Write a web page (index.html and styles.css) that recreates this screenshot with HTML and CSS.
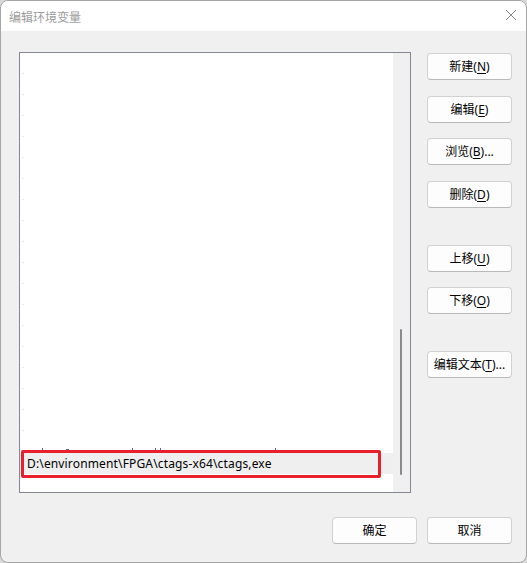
FILE: index.html
```html
<!DOCTYPE html>
<html lang="zh-CN">
<head>
<meta charset="utf-8">
<title>编辑环境变量</title>
<link rel="stylesheet" href="styles.css">
</head>
<body>
<div class="window">
  <div class="titlebar">
    <span class="title">编辑环境变量</span>
    <svg class="close" width="12" height="12" viewBox="0 0 12 12"><path d="M1 1 L11 11 M11 1 L1 11" stroke="#8a8a8a" stroke-width="1" fill="none"/></svg>
  </div>
  <div class="content">
    <div class="listbox">
      <div class="list-area">
        <div class="ghost">
          <span class="m m1"></span><span class="m m2"></span><span class="m m3"></span><span class="m m4"></span><span class="m m5"></span><span class="m m6"></span>
        </div>
        <div class="row selected">D:\environment\FPGA\ctags-x64\ctags,exe</div>
        <div class="highlight"></div>
      </div>
      <div class="scrollbar"><div class="thumb"></div></div>
    </div>
    <div class="side">
      <button class="btn">新建(<u>N</u>)</button>
      <button class="btn">编辑(<u>E</u>)</button>
      <button class="btn">浏览(<u>B</u>)...</button>
      <button class="btn">删除(<u>D</u>)</button>
      <button class="btn group">上移(<u>U</u>)</button>
      <button class="btn">下移(<u>O</u>)</button>
      <button class="btn group">编辑文本(<u>T</u>)...</button>
    </div>
  </div>
  <div class="footer">
    <button class="btn">确定</button>
    <button class="btn">取消</button>
  </div>
</div>
</body>
</html>
```
FILE: styles.css
```css
html, body {
  margin: 0;
  padding: 0;
  background: #d8d8d8;
}
body {
  font-family: "Segoe UI", "Noto Sans", "Noto Sans CJK SC", sans-serif;
  font-size: 12px;
  color: #000;
}
.window {
  width: 527px;
  height: 563px;
  box-sizing: border-box;
  border: 1px solid #a6a6a6;
  border-radius: 8px;
  background: #f0f0f0;
  overflow: hidden;
  display: flex;
  flex-direction: column;
}
.titlebar {
  height: 30px;
  background: #ffffff;
  display: flex;
  align-items: center;
  justify-content: space-between;
  padding-left: 8px;
  padding-right: 9px;
  flex: none;
}
.title {
  font-family: "Noto Sans CJK SC", sans-serif;
  font-size: 12px;
  color: #9c9c9c;
  margin-top: 1px;
}
.close {
  margin-top: -2px;
}
.content {
  display: flex;
  align-items: flex-start;
  padding: 21px 0 0 18px;
}
.listbox {
  width: 392px;
  height: 441px;
  box-sizing: border-box;
  border: 1px solid #828790;
  display: flex;
  flex: none;
}
.list-area {
  position: relative;
  flex: 1;
  background-color: #ffffff;
  background-image: repeating-linear-gradient(to bottom, transparent 0 20px, #e8e8e8 20px 21px);
  background-size: 2px 100%;
  background-position: 2px 0;
  background-repeat: no-repeat;
  display: flex;
  flex-direction: column;
  justify-content: flex-end;
  padding-bottom: 18px;
}
.ghost {
  height: 2px;
  margin-bottom: 3px;
  display: flex;
  align-items: flex-end;
}
.m {
  display: block;
  width: 1px;
  height: 2px;
  background: #5a6490;
}
.m1 { margin-left: 22px; }
.m2 { margin-left: 23px; width: 3px; height: 1px; }
.m3 { margin-left: 63px; }
.m4 { margin-left: 22px; }
.m5 { margin-left: 4px; }
.m6 { margin-left: 114px; }
.row {
  height: 21px;
  line-height: 21px;
  padding-left: 7px;
  white-space: nowrap;
  letter-spacing: 0.15px;
}
.row.selected {
  background: #efefef;
}
.highlight {
  position: absolute;
  left: 1px;
  bottom: 14px;
  width: 360px;
  height: 28px;
  box-sizing: border-box;
  border: 3px solid #e81f2c;
  border-radius: 2px;
}
.scrollbar {
  width: 17px;
  background: #f0f0f0;
  display: flex;
  flex-direction: column;
  justify-content: flex-end;
  padding-bottom: 17px;
  box-sizing: border-box;
}
.thumb {
  width: 2px;
  height: 146px;
  margin-left: 7px;
  background: #8a8a8a;
  border-radius: 1px;
}
.side {
  display: flex;
  flex-direction: column;
  gap: 15.67px;
  margin-left: 16px;
  margin-top: 1px;
}
.btn {
  width: 85px;
  height: 27px;
  box-sizing: border-box;
  background: #fdfdfd;
  border: 1px solid #d2d2d2;
  border-bottom-color: #b9b9b9;
  border-radius: 4px;
  font-family: "Segoe UI", "Noto Sans", "Noto Sans CJK SC", sans-serif;
  font-size: 12px;
  color: #000;
  padding: 0;
  line-height: 25px;
  white-space: nowrap;
}
.btn u {
  text-decoration-thickness: 1px;
  text-underline-offset: 2px;
}
.btn.group {
  margin-top: 21px;
}
.footer {
  display: flex;
  justify-content: flex-end;
  gap: 10px;
  padding-right: 14px;
  margin-top: 24px;
}
```
